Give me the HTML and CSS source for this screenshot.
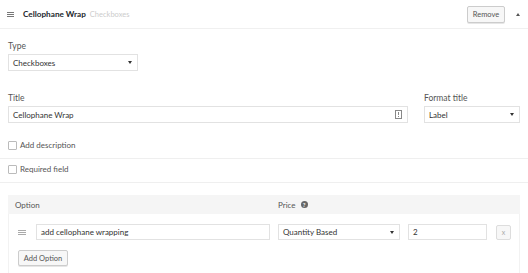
FILE: index.html
```html
<!DOCTYPE html>
<html>

<head>
    <title>Field - Cellophane Wrap</title>
    <link rel="stylesheet" href="styles.css">
</head>

<body>
    <div class="field">
        <div class="field-head">
            <span class="drag-lines"><i></i><i></i><i></i></span>
            <span class="field-name">Cellophane Wrap</span>
            <span class="field-type">Checkboxes</span>
            <button class="btn remove-btn">Remove</button>
            <span class="toggle-arrow"></span>
        </div>

        <div class="section">
            <div class="group type-group">
                <div class="label">Type</div>
                <div class="select type-select"><span>Checkboxes</span><span class="caret"></span></div>
            </div>

            <div class="group title-group">
                <div class="title-col">
                    <div class="label">Title</div>
                    <div class="input title-input">
                        <span>Cellophane Wrap</span>
                        <svg class="input-icon" width="7" height="9" viewBox="0 0 7 9">
                            <rect x="0.5" y="0.5" width="6" height="8" fill="none" stroke="#888" stroke-width="1" />
                            <rect x="3" y="2" width="1" height="3" fill="#888" />
                            <rect x="3" y="6" width="1" height="1" fill="#888" />
                        </svg>
                    </div>
                </div>
                <div class="format-col">
                    <div class="label">Format title</div>
                    <div class="select format-select"><span>Label</span><span class="caret"></span></div>
                </div>
            </div>
        </div>

        <div class="check-row first">
            <span class="checkbox"></span>
            <span>Add description</span>
        </div>
        <div class="check-row second">
            <span class="checkbox"></span>
            <span>Required field</span>
        </div>

        <div class="options">
            <div class="options-head">
                <span class="col-option">Option</span>
                <span class="col-price">Price <span class="help">?</span></span>
            </div>
            <div class="options-body">
                <div class="option-row">
                    <span class="drag-lines light"><i></i><i></i><i></i></span>
                    <div class="input option-input">add cellophane wrapping</div>
                    <div class="select price-select"><span>Quantity Based</span><span class="caret"></span></div>
                    <div class="input price-input">2</div>
                    <button class="btn delete-btn">x</button>
                </div>
                <button class="btn add-btn">Add Option</button>
            </div>
        </div>
    </div>
</body>

</html>
```

FILE: styles.css
```css
body {
    margin: 0;
    padding: 0;
    background: #fff;
    font-family: Lato, "Open Sans", sans-serif;
    font-size: 8px;
    color: #444;
}

.field {
    width: 528px;
}

.field-head {
    height: 29px;
    border-bottom: 1px solid #f0f0f0;
    display: flex;
    align-items: center;
    padding: 0 8px 0 7px;
    box-sizing: border-box;
}

.drag-lines {
    display: flex;
    flex-direction: column;
    gap: 1px;
    width: 7px;
}

.drag-lines i {
    display: block;
    height: 1px;
    background: #777;
}

.drag-lines.light i {
    background: #aaa;
}

.field-name {
    margin-left: 9px;
    font-weight: bold;
    font-size: 8.2px;
    color: #23282d;
}

.field-type {
    margin-left: 4px;
    color: #ccc;
    font-size: 7.5px;
}

.btn {
    font-family: Lato, "Open Sans", sans-serif;
    background: #f7f7f7;
    border: 1px solid #ccc;
    border-radius: 2px;
    box-shadow: 0 1px 0 #e6e6e6;
    color: #555;
    padding: 0;
    cursor: pointer;
}

.remove-btn {
    margin-left: auto;
    width: 38px;
    height: 17px;
    font-size: 7.5px;
}

.toggle-arrow {
    margin-left: 11px;
    width: 0;
    height: 0;
    border-left: 2px solid transparent;
    border-right: 2px solid transparent;
    border-bottom: 3px solid #555;
}

.section {
    padding: 0 8px;
}

.label {
    line-height: 12px;
    margin-bottom: 2px;
    font-size: 8.5px;
    color: #555;
}

.type-group {
    margin-top: 11px;
}

.title-group {
    margin-top: 21px;
    display: flex;
    gap: 16px;
}

.title-col {
    width: 400px;
}

.format-col {
    width: 96px;
}

.select,
.input {
    height: 17px;
    border: 1px solid #e2e2e2;
    box-sizing: border-box;
    display: flex;
    align-items: center;
    justify-content: space-between;
    padding: 0 5px 0 4px;
    color: #333;
    background: #fff;
}

.caret {
    width: 0;
    height: 0;
    border-left: 2px solid transparent;
    border-right: 2px solid transparent;
    border-top: 3px solid #333;
}

.type-select {
    width: 130px;
}

.title-input {
    padding-right: 5px;
}

.input-icon {
    display: block;
}

.check-row {
    display: flex;
    align-items: center;
    gap: 3px;
    padding-left: 8px;
    height: 18px;
    border-bottom: 1px solid #efefef;
    color: #555;
    font-size: 8px;
}

.check-row.first {
    margin-top: 13px;
    padding-bottom: 4px;
}

.check-row.second {
    padding-top: 1px;
    padding-bottom: 4px;
}

.checkbox {
    width: 9px;
    height: 9px;
    border: 1px solid #bbb;
    border-radius: 1px;
    box-sizing: border-box;
    background: #fff;
}

.options {
    margin: 12px 8px 0;
}

.options-head {
    height: 19px;
    background: #f5f5f5;
    display: flex;
    align-items: center;
    color: #555;
}

.col-option {
    width: 263px;
    padding-left: 7px;
}

.col-price {
    display: flex;
    align-items: center;
    gap: 5px;
}

.help {
    display: inline-flex;
    align-items: center;
    justify-content: center;
    width: 7px;
    height: 7px;
    border-radius: 50%;
    background: #666;
    color: #fff;
    font-size: 6px;
    font-weight: bold;
}

.options-body {
    border-left: 1px solid #f2f2f2;
    border-right: 1px solid #f2f2f2;
    padding: 10px 0 8px 9px;
}

.option-row {
    display: flex;
    align-items: center;
}

.option-row .input,
.option-row .select {
    height: 16px;
}

.option-row .drag-lines {
    width: 8px;
}

.option-input {
    margin-left: 10px;
    width: 234px;
    justify-content: flex-start;
}

.price-select {
    margin-left: 8px;
    width: 122px;
}

.price-input {
    margin-left: 8px;
    width: 79px;
    justify-content: flex-start;
}

.delete-btn {
    margin-left: 9px;
    width: 15px;
    height: 15px;
    font-size: 7px;
    color: #aaa;
    box-shadow: none;
    border-color: #ddd;
}

.add-btn {
    display: block;
    margin-top: 10px;
    width: 50px;
    height: 16px;
    font-size: 7.5px;
}
```
